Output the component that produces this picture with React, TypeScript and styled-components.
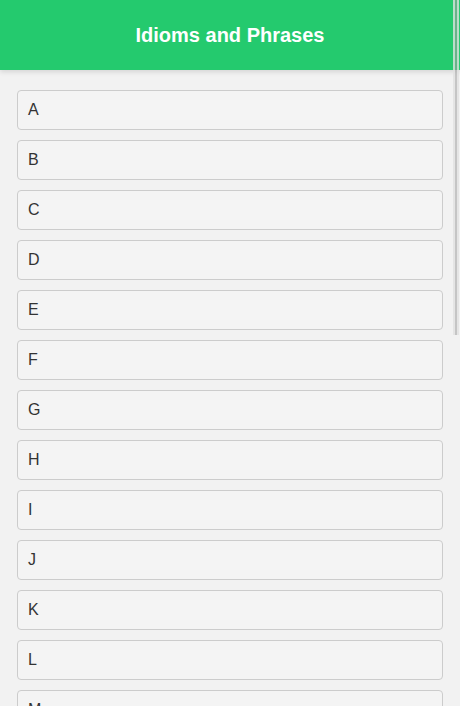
import styled, { createGlobalStyle } from "styled-components";

const LETTERS = "ABCDEFGHIJKLMNOPQRSTUVWXYZ".split("");

const GlobalStyle = createGlobalStyle`
  html, body {
    margin: 0;
    padding: 0;
    background: #f2f2f2;
    font-family: "Liberation Sans", Arial, sans-serif;
    scrollbar-width: none;
  }
  body::-webkit-scrollbar {
    width: 0;
    height: 0;
  }
`;

export default function App() {
  return (
    <>
      <GlobalStyle />
      <Page>
        <Header>
          <Title>Idioms and Phrases</Title>
        </Header>
        <LetterList>
          {LETTERS.map((letter) => (
            <LetterButton key={letter} type="button">
              {letter}
            </LetterButton>
          ))}
        </LetterList>
      </Page>
      <ScrollThumb />
    </>
  );
}

const Page = styled.div`
  display: flex;
  flex-direction: column;
  min-height: 100vh;
  background: #f2f2f2;
`;

const Header = styled.header`
  display: flex;
  align-items: center;
  justify-content: center;
  height: 70px;
  background: #24ca6e;
  box-shadow: 0 2px 5px rgba(0, 0, 0, 0.12);
  position: relative;
  z-index: 1;
`;

const Title = styled.h1`
  margin: 0;
  font-size: 20px;
  font-weight: 700;
  color: #ffffff;
`;

const LetterList = styled.div`
  display: flex;
  flex-direction: column;
  gap: 10px;
  padding: 20px 17px 110px;
`;

const LetterButton = styled.button`
  display: flex;
  align-items: center;
  height: 40px;
  width: 100%;
  padding: 0 10px;
  border: 1px solid #cccccc;
  border-radius: 4px;
  background: #f4f4f4;
  color: #333333;
  font-family: "Liberation Sans", Arial, sans-serif;
  font-size: 16px;
  text-align: left;
  cursor: pointer;
`;

const ScrollThumb = styled.div`
  position: fixed;
  top: 0;
  right: 1px;
  width: 6px;
  height: 335px;
  box-sizing: border-box;
  border-left: 2px solid rgba(255, 255, 255, 0.55);
  border-right: 2px solid rgba(255, 255, 255, 0.55);
  background: rgba(160, 160, 160, 0.55);
  z-index: 2;
`;
